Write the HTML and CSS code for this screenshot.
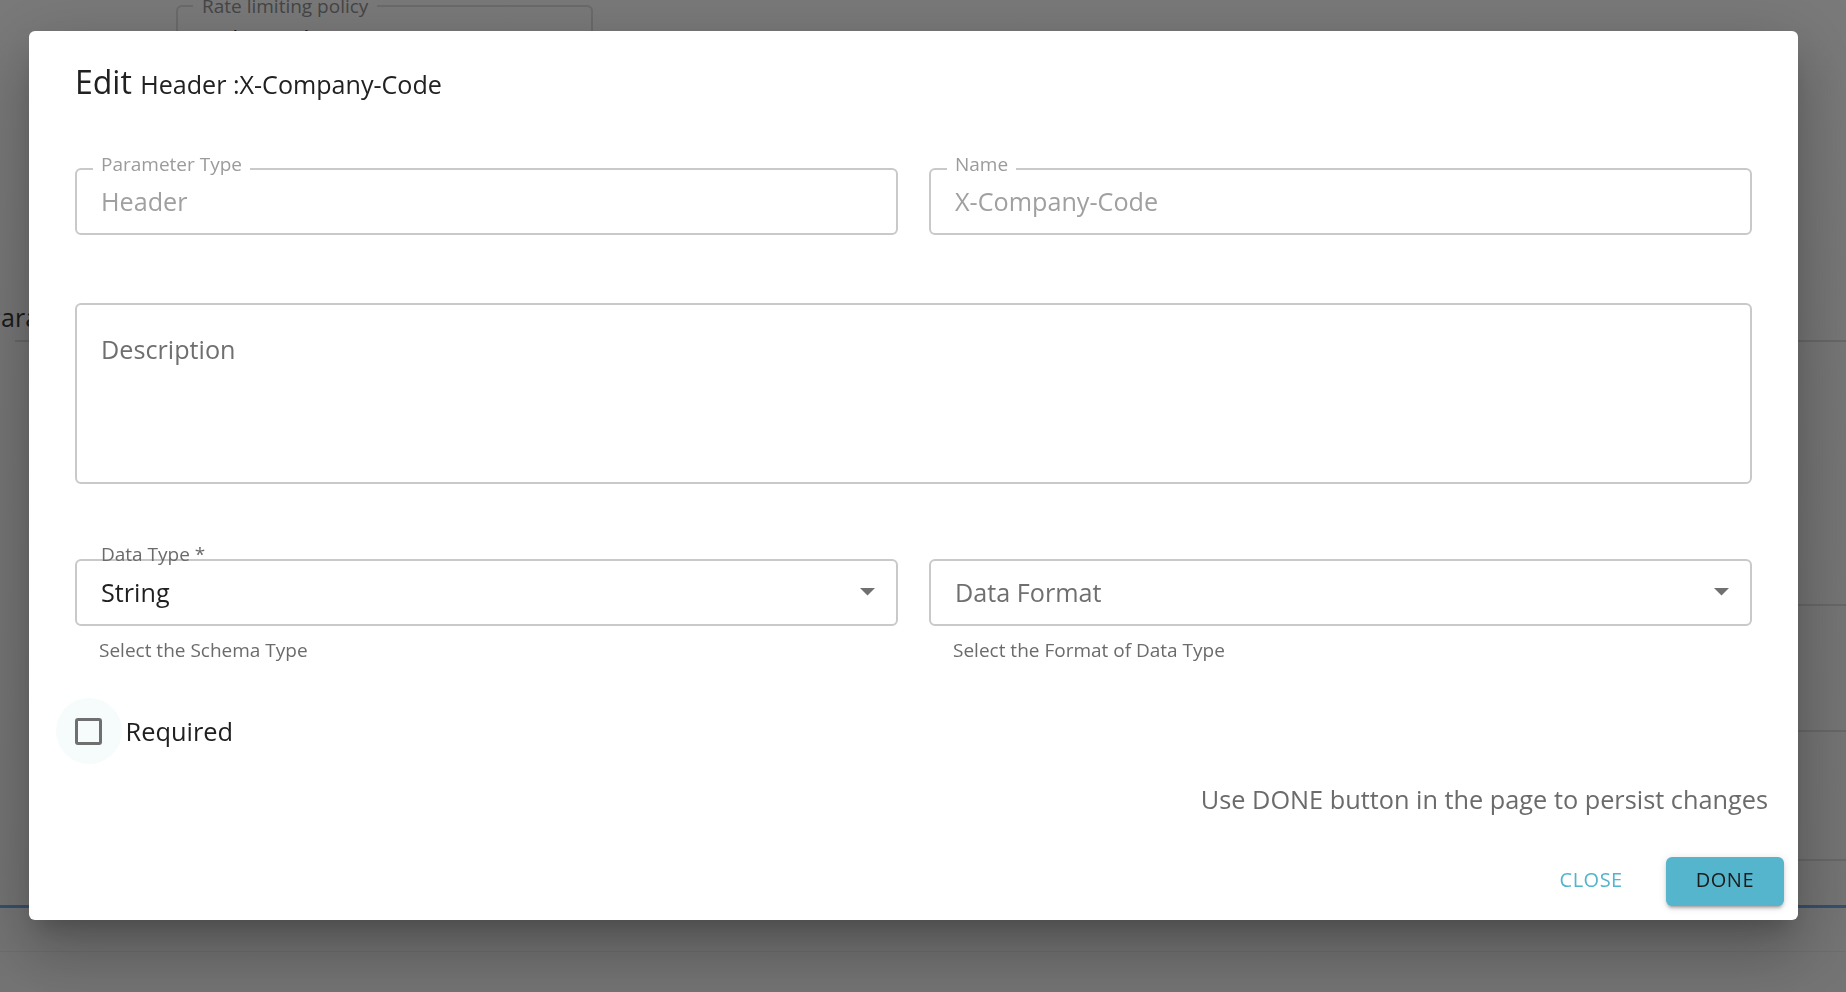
FILE: index.html
```html
<!DOCTYPE html>
<html lang="en">
<head>
<meta charset="utf-8">
<title>Edit Header</title>
<link rel="stylesheet" href="styles.css">
</head>
<body>
<div class="page">
  <fieldset class="bg-field">
    <legend>Rate limiting policy</legend>
    <div class="bg-value">Unlimited</div>
  </fieldset>
  <div class="bg-tab"><span>Parameters</span></div>
  <div class="bg-table">
    <div class="bg-row r1"></div>
    <div class="bg-row r2"></div>
    <div class="bg-row r3"></div>
  </div>
  <div class="bg-blue"></div>
  <div class="bg-foot"></div>
</div>

<div class="dialog" role="dialog">
  <div class="dialog-content">
    <h2 class="title"><span class="title-main">Edit</span> <span class="title-sub">Header :X-Company-Code</span></h2>

    <div class="grid row1">
      <div class="field disabled">
        <span class="label notch">Parameter Type</span>
        <div class="value">Header</div>
      </div>
      <div class="field disabled">
        <span class="label notch">Name</span>
        <div class="value">X-Company-Code</div>
      </div>
    </div>

    <div class="field textarea">
      <div class="value placeholder">Description</div>
    </div>

    <div class="grid row3">
      <div class="col">
        <div class="field select">
          <span class="label plain">Data Type *</span>
          <div class="value filled">String</div>
          <svg class="arrow" width="15" height="8" viewBox="0 0 15 8"><polygon points="0,0 15,0 7.5,7.5" fill="#707070"/></svg>
        </div>
        <p class="helper">Select the Schema Type</p>
      </div>
      <div class="col">
        <div class="field select">
          <div class="value placeholder">Data Format</div>
          <svg class="arrow" width="15" height="8" viewBox="0 0 15 8"><polygon points="0,0 15,0 7.5,7.5" fill="#707070"/></svg>
        </div>
        <p class="helper">Select the Format of Data Type</p>
      </div>
    </div>

    <label class="check-row">
      <span class="check"><span class="box"></span></span>
      <span class="check-label">Required</span>
    </label>

    <p class="note">Use DONE button in the page to persist changes</p>
  </div>
  <div class="actions">
    <button class="btn text-btn">CLOSE</button>
    <button class="btn contained">DONE</button>
  </div>
</div>
</body>
</html>
```

FILE: styles.css
```css
html, body {
  margin: 0;
  padding: 0;
}
body {
  font-family: "Open Sans", "Noto Sans", sans-serif;
  overflow: hidden;
  width: 1846px;
  height: 992px;
}

/* ---------- background page (under backdrop) ---------- */
.page {
  height: 992px;
  background: linear-gradient(180deg, #7a7a7a 0%, #767676 40%, #747474 100%);
  overflow: hidden;
}
.bg-field {
  margin: -6px 0 0 176px;
  width: 417px;
  height: 150px;
  box-sizing: border-box;
  border: 2px solid #6b6b6b;
  border-radius: 6px;
  padding: 0;
  min-width: 0;
}
.bg-field legend {
  margin-left: 15px;
  padding: 0 9px;
  font-size: 19px;
  line-height: 24px;
  color: #464646;
}
.bg-value {
  margin-top: 5px;
  padding-left: 22px;
  font-size: 24px;
  line-height: 32px;
  color: #1c1c1c;
}
.bg-tab {
  margin: 157px 0 0 15px;
  padding-bottom: 7px;
  border-bottom: 2px solid #686868;
  font-size: 25px;
  line-height: 32px;
  color: #1a1a1a;
}
.bg-tab span {
  display: inline-block;
  margin-left: -29px;
}
.bg-table {
  margin-left: 200px;
}
.bg-row {
  border-bottom: 2px solid #686868;
}
.r1 { height: 262px; }
.r2 { height: 124px; }
.r3 { height: 127px; }
.bg-blue {
  margin-top: 44px;
  height: 3px;
  background: #36506e;
}
.bg-foot {
  margin-top: 43px;
  height: 1px;
  background: #6e6e6e;
}

/* ---------- dialog ---------- */
.dialog {
  position: fixed;
  left: 29px;
  top: 31px;
  width: 1769px;
  height: 889px;
  box-sizing: border-box;
  background: #fff;
  border-radius: 6px;
  display: flex;
  flex-direction: column;
  box-shadow: 0 16px 22px -10px rgba(0,0,0,0.2),
              0 36px 57px 4px rgba(0,0,0,0.14),
              0 14px 69px 12px rgba(0,0,0,0.12);
}
.dialog-content {
  padding: 0 46px;
}
.title {
  margin: 31px 0 0;
  height: 42px;
  font-weight: 400;
  font-size: 32px;
  line-height: 40px;
  color: #212121;
}
.title-sub {
  font-size: 25.1px;
}

.grid {
  display: grid;
  grid-template-columns: 1fr 1fr;
  column-gap: 31px;
}
.row1 { margin-top: 64px; }
.row3 { margin-top: 75px; }

.field {
  position: relative;
  box-sizing: border-box;
  border: 2px solid #c9c9c9;
  border-radius: 6px;
  height: 67px;
  padding: 0 24px;
  display: flex;
  align-items: center;
}
.field.select {
  height: 67px;
  padding-bottom: 1px;
}
.field.textarea {
  margin-top: 68px;
  height: 181px;
  padding-top: 28px;
  padding-bottom: 0;
  align-items: flex-start;
}
.value {
  font-size: 25.2px;
  line-height: 33px;
  color: #a0a0a0;
  white-space: nowrap;
}
.value.placeholder {
  color: #6f6f6f;
}
.value.filled {
  color: #1f1f1f;
}

.label {
  position: absolute;
  left: 16px;
  top: -18px;
  padding: 0 8px;
  font-size: 19px;
  line-height: 24px;
  white-space: nowrap;
}
.label.notch {
  background: #fff;
  color: #9b9b9b;
}
.label.plain {
  top: -19px;
  color: #6b6b6b;
}

.arrow {
  position: absolute;
  right: 21px;
  top: 27px;
}

.helper {
  margin: 12px 0 0;
  padding-left: 24px;
  font-size: 19px;
  line-height: 24px;
  color: #6b6b6b;
}

.check-row {
  margin-top: 36px;
  margin-left: -19.5px;
  display: flex;
  align-items: center;
  width: max-content;
}
.check {
  width: 66px;
  height: 66px;
  border-radius: 50%;
  background: rgba(80, 180, 204, 0.05);
  display: flex;
  align-items: center;
  justify-content: center;
}
.box {
  box-sizing: border-box;
  width: 27px;
  height: 27px;
  border: 3px solid #6f6f6f;
  border-radius: 3px;
}
.check-label {
  margin-left: 4px;
  font-size: 25.4px;
  line-height: 32px;
  color: #1f1f1f;
}

.note {
  margin: 19px -16px 0 0;
  text-align: right;
  font-size: 25.3px;
  line-height: 32px;
  color: #6b6b6b;
}

.actions {
  margin-top: auto;
  padding: 0 14px 14px;
  display: flex;
  justify-content: flex-end;
  gap: 15px;
}
.btn {
  font-family: "Open Sans", "Noto Sans", sans-serif;
  font-size: 20px;
  letter-spacing: 0.5px;
  height: 49px;
  border: 0;
  border-radius: 6px;
  background: transparent;
  cursor: pointer;
}
.text-btn {
  padding: 0 28px 4px;
  color: #52b5cd;
}
.contained {
  padding: 0 30px 4px;
  background: #55b5cc;
  color: #1b1b1b;
  box-shadow: 0 4px 2px -3px rgba(0,0,0,0.2),
              0 3px 3px 0 rgba(0,0,0,0.14),
              0 1px 8px 0 rgba(0,0,0,0.12);
}
```
